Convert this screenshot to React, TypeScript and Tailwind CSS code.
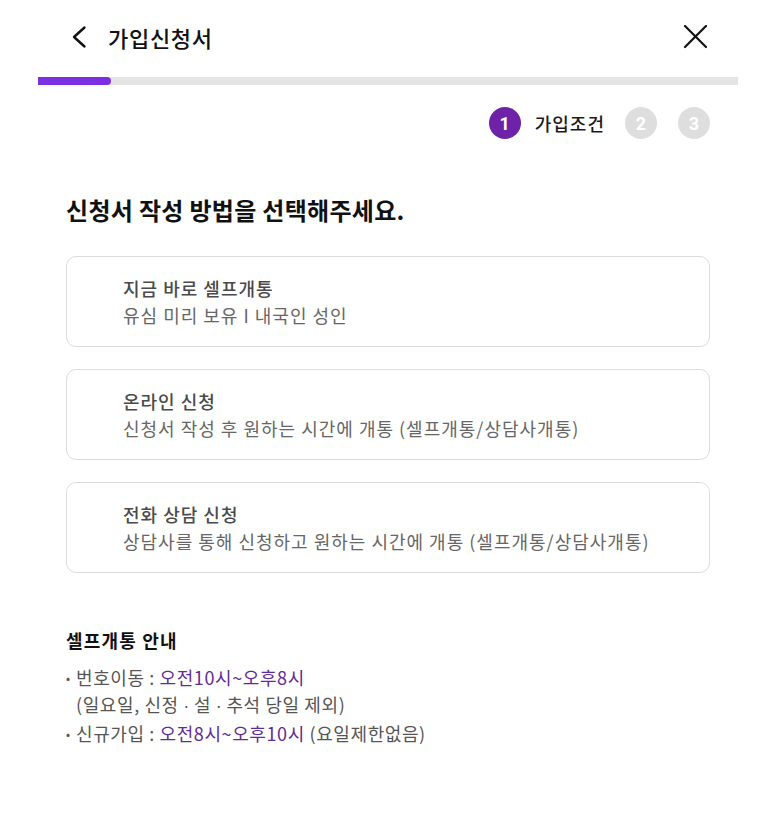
import React from "react";

const cards = [
  { title: "지금 바로 셀프개통", desc: "유심 미리 보유 I 내국인 성인" },
  { title: "온라인 신청", desc: "신청서 작성 후 원하는 시간에 개통 (셀프개통/상담사개통)" },
  { title: "전화 상담 신청", desc: "상담사를 통해 신청하고 원하는 시간에 개통 (셀프개통/상담사개통)" },
];

function Dot() {
  return <span className="font-['Liberation_Sans',sans-serif] tracking-normal">·</span>;
}

export default function App() {
  return (
    <div className="w-[770px] min-h-[832px] bg-white font-['Noto_Sans_CJK_KR','Noto_Sans',sans-serif] text-[#111]">
      {/* Header */}
      <div className="h-[74px] flex items-center justify-between pl-[71px] pr-[63px]">
        <div className="flex items-center">
          <svg width="16" height="24" viewBox="0 0 16 24" fill="none" stroke="#111" strokeWidth="2.4" strokeLinecap="round" strokeLinejoin="round">
            <polyline points="13.5,2.5 3,12 13.5,21.5" />
          </svg>
          <span className="ml-[21px] text-[22px] font-medium tracking-[0.7px] leading-[30px] text-[#111]">가입신청서</span>
        </div>
        <svg width="24" height="24" viewBox="0 0 24 24" fill="none" stroke="#111" strokeWidth="2.2" strokeLinecap="round">
          <line x1="2" y1="1" x2="23" y2="22" />
          <line x1="23" y1="1" x2="2" y2="22" />
        </svg>
      </div>

      {/* Progress */}
      <div className="mt-[3px] ml-[38px] mr-[32px] h-2 bg-[#e4e4e4]">
        <div className="h-full w-[73px] bg-[#7b2fe0] rounded-r-full" />
      </div>

      {/* Steps */}
      <div className="mt-[22px] flex items-center justify-end pr-[60px]">
        <div className="w-8 h-8 rounded-full bg-[#6e22a8] flex items-center justify-center text-white text-[18px] font-bold font-['Roboto','Liberation_Sans',sans-serif]">1</div>
        <span className="ml-[14px] text-[18px] font-medium tracking-[1px] leading-[32px] text-[#1a1a1a]">가입조건</span>
        <div className="ml-[20px] w-8 h-8 rounded-full bg-[#dedede] flex items-center justify-center text-white text-[18px] font-bold font-['Roboto','Liberation_Sans',sans-serif]">2</div>
        <div className="ml-[21px] w-8 h-8 rounded-full bg-[#dedede] flex items-center justify-center text-white text-[18px] font-bold font-['Roboto','Liberation_Sans',sans-serif]">3</div>
      </div>

      {/* Content */}
      <div className="pl-[66px] pr-[60px]">
        <h1 className="mt-[55px] text-[24px] font-bold leading-[32px] tracking-[0.3px] text-[#111]">
          신청서 작성 방법을 선택해주세요.
        </h1>

        <div className="mt-[30px] flex flex-col gap-[22px]">
          {cards.map((c) => (
            <div
              key={c.title}
              className="h-[91px] border border-[#dcdcdc] rounded-[10px] flex flex-col justify-center pl-[56px]"
            >
              <div className="text-[18px] leading-[27px] font-medium tracking-[1px] text-[#4a4a4a]">{c.title}</div>
              <div className="text-[18px] leading-[27px] tracking-[1px] text-[#666]">{c.desc}</div>
            </div>
          ))}
        </div>

        {/* Info */}
        <div className="mt-[54px]">
          <div className="text-[18px] leading-[27px] font-bold tracking-[1.2px] text-[#111]">셀프개통 안내</div>
          <div className="mt-[10px] text-[18px] leading-[27px] tracking-[0.6px] text-[#555]">
            <div className="flex">
              <span className="w-[10px] shrink-0 text-[12px]">•</span>
              <div>
                번호이동 : <span className="text-[#5f2b96]">오전10시~오후8시</span>
                <br />
                (일요일, 신정 <Dot /> 설 <Dot /> 추석 당일 제외)
              </div>
            </div>
            <div className="flex">
              <span className="w-[10px] shrink-0 text-[12px]">•</span>
              <div>
                신규가입 : <span className="text-[#5f2b96]">오전8시~오후10시</span> (요일제한없음)
              </div>
            </div>
          </div>
        </div>
      </div>
    </div>
  );
}
